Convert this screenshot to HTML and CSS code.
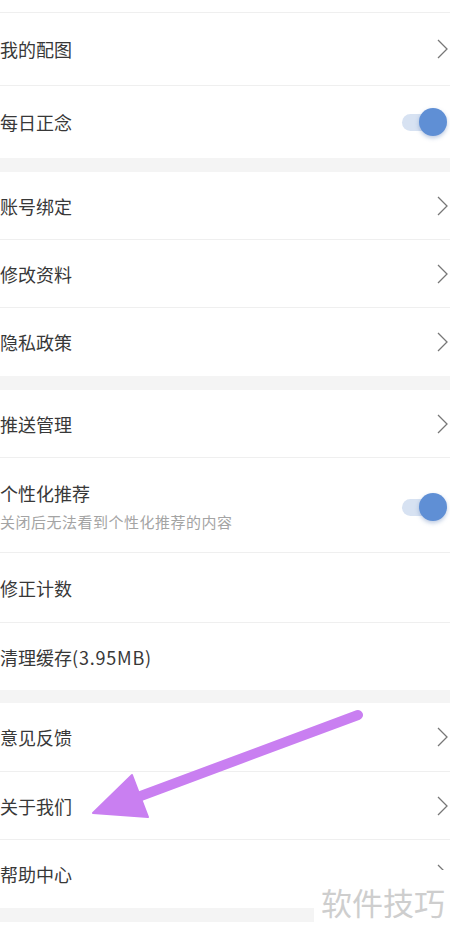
FILE: index.html
```html
<!DOCTYPE html>
<html lang="zh-CN">
<head>
    <meta charset="UTF-8">
    <meta name="viewport" content="width=device-width, initial-scale=1.0">
    <title>设置</title>
    <link rel="stylesheet" href="styles.css">
</head>
<body>
    <div class="page">
        <div class="group">
            <div class="stub"></div>
            <div class="row tall-first">
                <span class="label">我的配图</span>
                <svg class="chev" viewBox="0 0 12 20"><polyline points="1,1 10,10 1,19"/></svg>
            </div>
            <div class="row tall">
                <span class="label">每日正念</span>
                <div class="toggle"><span class="track"></span><span class="knob"></span></div>
            </div>
        </div>

        <div class="group">
            <div class="row">
                <span class="label">账号绑定</span>
                <svg class="chev" viewBox="0 0 12 20"><polyline points="1,1 10,10 1,19"/></svg>
            </div>
            <div class="row">
                <span class="label">修改资料</span>
                <svg class="chev" viewBox="0 0 12 20"><polyline points="1,1 10,10 1,19"/></svg>
            </div>
            <div class="row">
                <span class="label">隐私政策</span>
                <svg class="chev" viewBox="0 0 12 20"><polyline points="1,1 10,10 1,19"/></svg>
            </div>
        </div>

        <div class="group g13">
            <div class="row">
                <span class="label">推送管理</span>
                <svg class="chev" viewBox="0 0 12 20"><polyline points="1,1 10,10 1,19"/></svg>
            </div>
            <div class="row double">
                <div class="text">
                    <span class="label">个性化推荐</span>
                    <span class="sub">关闭后无法看到个性化推荐的内容</span>
                </div>
                <div class="toggle"><span class="track"></span><span class="knob"></span></div>
            </div>
            <div class="row r70">
                <span class="label">修正计数</span>
            </div>
            <div class="row r67">
                <span class="label">清理缓存<span class="num">(3.95MB)</span></span>
            </div>
        </div>

        <div class="group">
            <div class="row r69">
                <span class="label">意见反馈</span>
                <svg class="chev" viewBox="0 0 12 20"><polyline points="1,1 10,10 1,19"/></svg>
            </div>
            <div class="row">
                <span class="label">关于我们</span>
                <svg class="chev" viewBox="0 0 12 20"><polyline points="1,1 10,10 1,19"/></svg>
            </div>
            <div class="row">
                <span class="label">帮助中心</span>
                <svg class="chev" viewBox="0 0 12 20"><polyline points="1,1 10,10 1,19"/></svg>
            </div>
        </div>

        <div class="group tail"></div>

        <svg class="arrow" viewBox="0 0 450 937">
            <line x1="358" y1="715" x2="138" y2="797"/>
            <polygon points="93,813 132,775 148,817"/>
        </svg>

        <div class="watermark">软件技巧</div>
    </div>
</body>
</html>
```

FILE: styles.css
```css
body { margin: 0; background: #f4f4f4; font-family: "Noto Sans CJK SC", "Noto Sans", sans-serif; overflow: hidden; }
.page { position: relative; width: 450px; height: 937px; overflow: hidden; }

.group { background: #fff; margin-bottom: 14px; }
.group.g13 { margin-bottom: 13px; }
.group.tail { height: 15px; margin: 0; }
.stub { height: 13px; border-bottom: 1px solid #efefef; box-sizing: border-box; }

.row { display: flex; align-items: center; justify-content: space-between; height: 68px; box-sizing: border-box; border-bottom: 1px solid #efefef; }
.row:last-child { border-bottom: none; }
.row.tall-first { height: 73px; }
.row.tall { height: 72px; }
.row.double { height: 95px; padding-top: 4px; }
.row.r70 { height: 70px; }
.row.r67 { height: 67px; }
.row.r69 { height: 69px; }

.label { font-size: 18px; color: #383838; line-height: 24px; }
.num { letter-spacing: 0.8px; }
.text { display: flex; flex-direction: column; gap: 6px; }
.sub { font-size: 15px; color: #a4a4a4; line-height: 22px; letter-spacing: 0.5px; }

.chev { width: 12px; height: 20px; margin-right: 1px; fill: none; stroke: #777; stroke-width: 1.3; }

.toggle { position: relative; width: 45px; height: 28px; margin-right: 3px; }
.track { position: absolute; left: 0; top: 6px; width: 34px; height: 17px; border-radius: 9px; background: #d7e2f2; }
.knob { position: absolute; right: 0; top: 0; width: 28px; height: 28px; border-radius: 50%; background: #5f8fd5; box-shadow: 0 2px 4px rgba(60, 100, 170, 0.35); }

.arrow { position: absolute; left: 0; top: 0; width: 450px; height: 937px; pointer-events: none; }
.arrow line { stroke: #c97ff1; stroke-width: 10; stroke-linecap: round; }
.arrow polygon { fill: #c97ff1; stroke: #c97ff1; stroke-width: 2; stroke-linejoin: round; }

.watermark { position: absolute; left: 314px; top: 870px; right: 0; bottom: 0; background: #fff; padding-left: 7px; padding-bottom: 4px; display: flex; align-items: center; font-size: 31px; color: #cecece; }
```
